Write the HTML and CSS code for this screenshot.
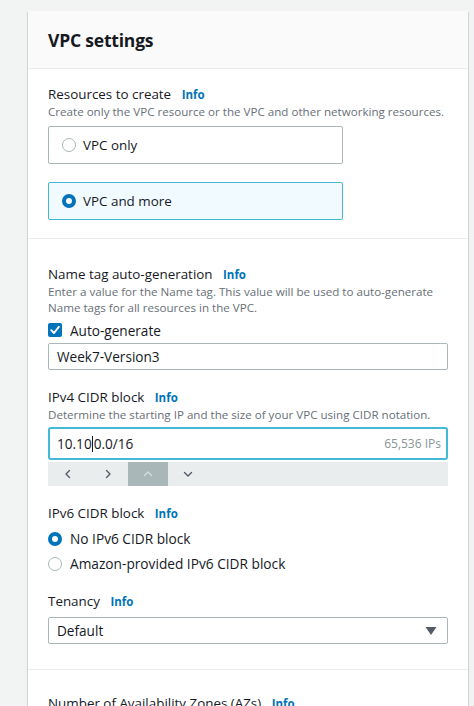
FILE: index.html
```html
<!DOCTYPE html>
<html lang="en">
<head>
<meta charset="utf-8">
<title>VPC settings</title>
<link rel="stylesheet" href="styles.css">
</head>
<body>
<div class="page">
  <div class="card">
    <div class="card-header"><h2 class="title">VPC settings</h2></div>

    <div class="section first">
      <div class="label">Resources to create <span class="info">Info</span></div>
      <div class="desc">Create only the VPC resource or the VPC and other networking resources.</div>
      <div class="tiles">
        <div class="tile"><span class="radio"></span><span>VPC only</span></div>
        <div class="tile selected"><span class="radio checked"></span><span>VPC and more</span></div>
      </div>
    </div>

    <div class="section">
      <div class="label">Name tag auto-generation <span class="info">Info</span></div>
      <div class="desc">Enter a value for the Name tag. This value will be used to auto-generate Name tags for all resources in the VPC.</div>
      <div class="check-row">
        <span class="checkbox"><svg viewBox="0 0 14 14" width="14" height="14"><path d="M3.2 7.2 L6 10 L10.8 3.8" fill="none" stroke="#fff" stroke-width="1.9" stroke-linecap="round" stroke-linejoin="round"/></svg></span>
        <span>Auto-generate</span>
      </div>
      <div class="input">Week7-Version3</div>

      <div class="label gap-lg">IPv4 CIDR block <span class="info">Info</span></div>
      <div class="desc single">Determine the starting IP and the size of your VPC using CIDR notation.</div>
      <div class="input focused">
        <span class="value">10.10<span class="caret"></span>0.0/16</span>
        <span class="hint">65,536 IPs</span>
      </div>
      <div class="toolbar">
        <span class="tbtn"><svg viewBox="0 0 12 12" width="12" height="12"><path d="M7.5 2.5 L4 6 L7.5 9.5" fill="none" stroke="#545b64" stroke-width="1.4" stroke-linecap="round" stroke-linejoin="round"/></svg></span>
        <span class="tbtn"><svg viewBox="0 0 12 12" width="12" height="12"><path d="M4.5 2.5 L8 6 L4.5 9.5" fill="none" stroke="#545b64" stroke-width="1.4" stroke-linecap="round" stroke-linejoin="round"/></svg></span>
        <span class="tbtn active"><svg viewBox="0 0 12 12" width="12" height="12"><path d="M2.5 7.5 L6 4 L9.5 7.5" fill="none" stroke="#d5dbdb" stroke-width="1.4" stroke-linecap="round" stroke-linejoin="round"/></svg></span>
        <span class="tbtn"><svg viewBox="0 0 12 12" width="12" height="12"><path d="M2.5 4.5 L6 8 L9.5 4.5" fill="none" stroke="#545b64" stroke-width="1.4" stroke-linecap="round" stroke-linejoin="round"/></svg></span>
      </div>

      <div class="label gap-lg">IPv6 CIDR block <span class="info">Info</span></div>
      <div class="radio-group">
        <div class="radio-row"><span class="radio checked"></span><span>No IPv6 CIDR block</span></div>
        <div class="radio-row"><span class="radio"></span><span>Amazon-provided IPv6 CIDR block</span></div>
      </div>

      <div class="label gap-md">Tenancy <span class="info">Info</span></div>
      <div class="select">
        <span>Default</span>
        <svg viewBox="0 0 12 10" width="12" height="10"><path d="M0.5 1 L11.5 1 L6 9 Z" fill="#545b64"/></svg>
      </div>
    </div>

    <div class="section last">
      <div class="label">Number of Availability Zones (AZs) <span class="info">Info</span></div>
    </div>
  </div>
</div>
</body>
</html>
```

FILE: styles.css
```css
* { box-sizing: border-box; }
html, body { margin: 0; padding: 0; }
body {
  background: #f2f3f3;
  font-family: "Open Sans", "Noto Sans", sans-serif;
  color: #16191f;
  overflow: hidden;
  height: 706px;
}
.page {
  padding: 11px 6px 0 28px;
}
.card {
  background: #fff;
  box-shadow: 0 1px 1px 0 rgba(0, 28, 36, 0.2), 1px 1px 1px 0 rgba(0, 28, 36, 0.1), -1px 1px 1px 0 rgba(0, 28, 36, 0.1);
  width: 440px;
}
.card-header {
  background: #fafafa;
  height: 58px;
  border-bottom: 1px solid #eaeded;
  padding: 0 20px;
  display: flex;
  align-items: center;
}
.title {
  margin: 0;
  font-size: 17.5px;
  font-weight: 700;
  letter-spacing: -0.2px;
  line-height: 22px;
  padding-top: 1px;
}
.section {
  padding: 26px 20px 25px 20px;
  border-top: 1px solid #eaeded;
}
.section.first {
  border-top: none;
  padding: 16px 20px 18px 20px;
}
.section.last {
  padding-top: 24px;
  padding-bottom: 0;
}
.label {
  font-size: 13.4px;
  line-height: 18px;
  height: 18px;
  white-space: nowrap;
}
.info {
  color: #0073bb;
  font-weight: 700;
  font-size: 11.5px;
  margin-left: 7px;
}
.desc {
  font-size: 11.6px;
  line-height: 16px;
  color: #687078;
  margin-top: 1px;
  white-space: nowrap;
}
.desc:not(.single) { white-space: normal; }
.gap-lg { margin-top: 18px; }
.gap-md { margin-top: 16px; }
.tiles {
  margin-top: 6px;
  display: flex;
  flex-direction: column;
  gap: 18px;
  width: 295px;
}
.tile {
  height: 38px;
  border: 1px solid #aab7b8;
  border-radius: 2px;
  display: flex;
  align-items: center;
  gap: 7px;
  padding-left: 13px;
  font-size: 13.4px;
}
.tile.selected {
  background: #f1faff;
  border-color: #44b9d6;
}
.radio {
  width: 14px;
  height: 14px;
  border-radius: 50%;
  border: 1.5px solid #aab7b8;
  background: #fff;
  flex: none;
}
.radio.checked {
  border: 4px solid #0073bb;
}
.check-row {
  margin-top: 4px;
  height: 20px;
  display: flex;
  align-items: center;
  gap: 8px;
  font-size: 13.6px;
}
.checkbox {
  width: 14px;
  height: 14px;
  border-radius: 2px;
  background: #0073bb;
  display: flex;
  flex: none;
}
.input {
  margin-top: 3px;
  width: 400px;
  height: 27px;
  border: 1px solid #aab7b8;
  border-radius: 2px;
  padding: 0 8px;
  display: flex;
  align-items: center;
  font-size: 13.6px;
}
.input.focused {
  margin-top: 4px;
  height: 33px;
  border: 2px solid #44b9d6;
  border-radius: 3px;
  padding: 0 5px 0 7px;
  justify-content: space-between;
}
.caret {
  display: inline-block;
  width: 1px;
  height: 16px;
  background: #16191f;
  vertical-align: -3px;
  margin: 0 0.5px;
}
.hint {
  color: #879596;
  font-size: 12px;
}
.toolbar {
  margin-top: 2px;
  width: 400px;
  height: 24px;
  background: #eaeded;
  display: flex;
}
.tbtn {
  width: 40px;
  height: 24px;
  display: flex;
  align-items: center;
  justify-content: center;
}
.tbtn.active {
  background: #aab7b8;
}
.radio-group {
  margin-top: 4px;
  display: flex;
  flex-direction: column;
}
.radio-row {
  height: 25px;
  display: flex;
  align-items: center;
  gap: 8px;
  font-size: 13.7px;
}
.select {
  margin-top: 7px;
  width: 400px;
  height: 27px;
  border: 1px solid #aab7b8;
  border-radius: 2px;
  padding: 0 10px 0 8px;
  display: flex;
  align-items: center;
  justify-content: space-between;
  font-size: 13.6px;
}
```
